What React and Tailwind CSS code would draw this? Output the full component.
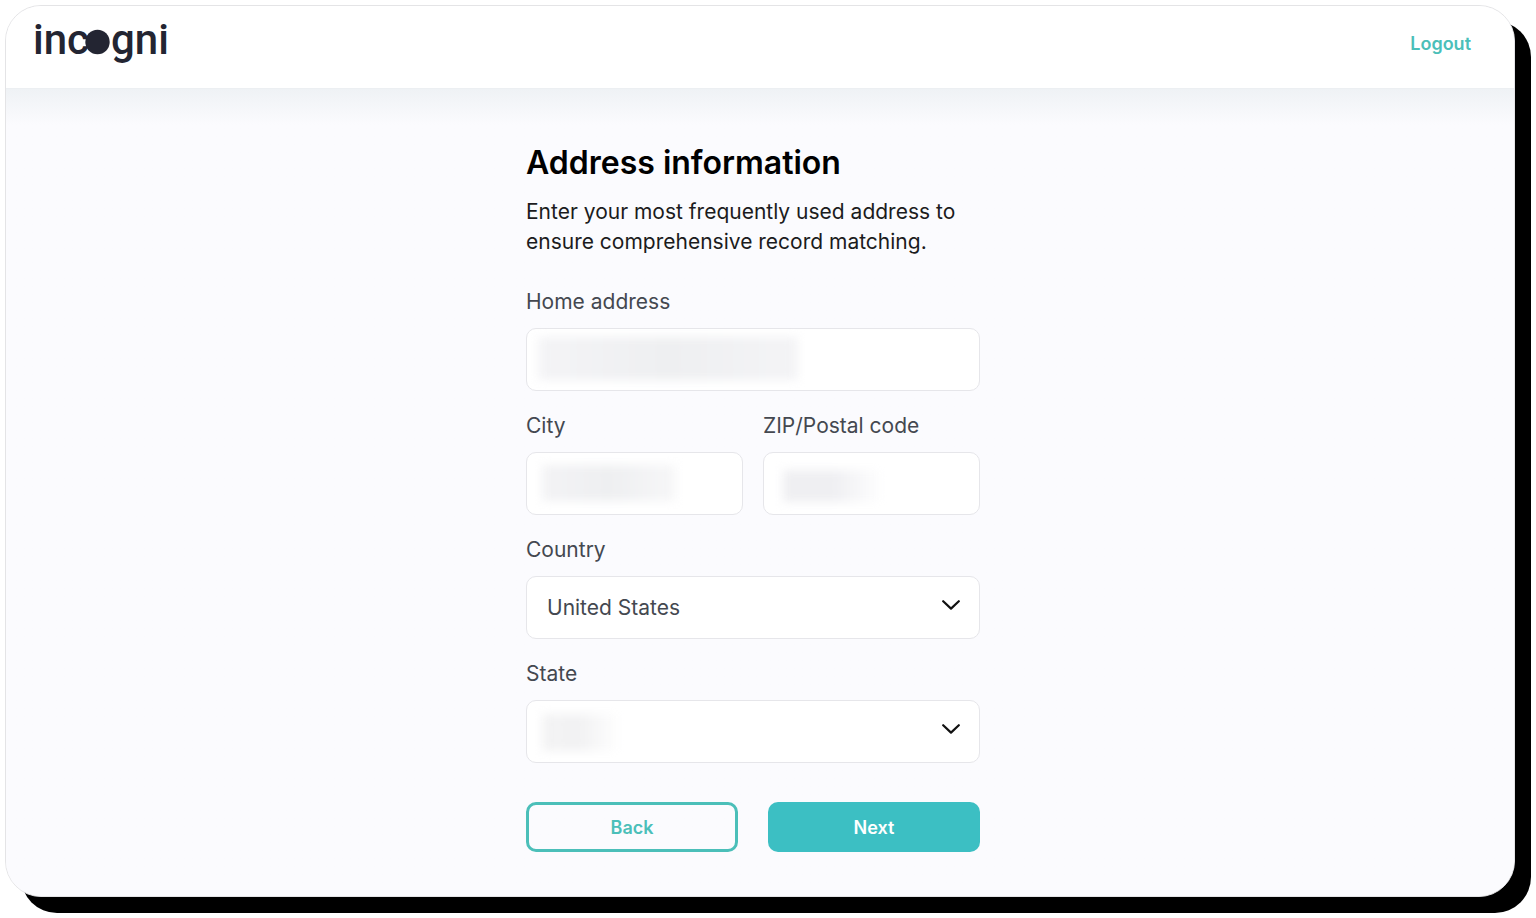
import { useState } from "react";

const fieldClass =
  "block h-[63px] w-full appearance-none rounded-[10px] border border-[#e6e6ea] bg-white px-5 text-[21px] text-[#444850] outline-none focus:border-[#3cbfc3]";

const Logo = () => (
  <svg
    viewBox="0 0 146 60"
    className="h-[60px] w-[146px] text-[#232532]"
    role="img"
    aria-label="incogni"
  >
    <g fill="currentColor" fontFamily="Roboto, sans-serif" fontWeight="500" fontSize="42">
      <text x="3" y="44">
        inc
      </text>
      <text x="81" y="44">
        gni
      </text>
    </g>
    <circle cx="67.5" cy="32" r="12.2" fill="currentColor" />
  </svg>
);

const ChevronIcon = () => (
  <svg
    viewBox="0 0 18 10"
    className="pointer-events-none absolute top-6 right-5 h-[10px] w-[18px]"
    fill="none"
    stroke="#111111"
    strokeWidth="2.2"
    strokeLinecap="round"
    strokeLinejoin="round"
    aria-hidden="true"
  >
    <path d="M1.2 1.2 9 8.6l7.8-7.4" />
  </svg>
);

// Label with its control below, mask hides private values
const Field = ({ id, label, mask, children }) => (
  <div className="min-w-0 flex-1">
    <label htmlFor={id} className="block text-[21px] leading-[30px] text-[#444850]">
      {label}
    </label>
    <div className="relative mt-[11px]">
      {children}
      {mask && (
        <div
          aria-hidden="true"
          className={`pointer-events-none absolute blur-[5px] ${mask}`}
        />
      )}
    </div>
  </div>
);

const App = () => {
  const [form, setForm] = useState({
    address: "",
    city: "",
    zip: "",
    country: "United States",
    state: "",
  });

  const handleChange = (e) => {
    setForm({ ...form, [e.target.name]: e.target.value });
  };

  return (
    <div className="flex min-h-screen bg-white pt-[5px] pr-[21px] pb-[21px] pl-[5px] font-[Inter,sans-serif]">
      <div className="flex flex-1 flex-col overflow-hidden rounded-[36px] border border-[#e4e4e6] bg-[#fbfbfe] shadow-[16px_16px_0_0_#000000]">
        <header className="flex h-[83px] items-start justify-between border-b border-[#eceff2] bg-white pt-1 pr-[43px] pl-6">
          <Logo />
          <a
            href="#logout"
            className="mt-[21px] text-[18px] leading-[26px] font-semibold text-[#4bbfb9]"
          >
            Logout
          </a>
        </header>

        <main className="flex flex-1 justify-center bg-linear-to-b from-[#eff2f5] to-[#fbfbfe] to-[36px] pt-[54px] pr-[14px] pb-11">
          <form className="w-full max-w-[454px]" onSubmit={(e) => e.preventDefault()}>
            <h1 className="text-[32px] leading-[40px] font-semibold text-black">
              Address information
            </h1>
            <p className="mt-[14px] text-[21px] leading-[30px] text-[#1b1b20]">
              Enter your most frequently used address to ensure comprehensive
              record matching.
            </p>

            <div className="mt-[30px] flex flex-col gap-5">
              <Field
                id="address"
                label="Home address"
                mask="top-[9px] left-3 h-[43px] w-[260px] bg-linear-to-r from-[#f4f4f6] via-[#eeeff1] to-[#f4f4f6]"
              >
                <input
                  id="address"
                  name="address"
                  value={form.address}
                  onChange={handleChange}
                  className={fieldClass}
                />
              </Field>

              <div className="flex gap-5">
                <Field
                  id="city"
                  label="City"
                  mask="top-[13px] left-4 h-9 w-[134px] bg-linear-to-r from-[#f3f3f5] via-[#eeeff1] to-[#f7f7f8]"
                >
                  <input
                    id="city"
                    name="city"
                    value={form.city}
                    onChange={handleChange}
                    className={fieldClass}
                  />
                </Field>
                <Field
                  id="zip"
                  label="ZIP/Postal code"
                  mask="top-[18px] left-5 h-8 w-[100px] bg-linear-to-r from-[#efeff2] via-[#efeff2] to-white"
                >
                  <input
                    id="zip"
                    name="zip"
                    value={form.zip}
                    onChange={handleChange}
                    className={fieldClass}
                  />
                </Field>
              </div>

              <Field id="country" label="Country">
                <select
                  id="country"
                  name="country"
                  value={form.country}
                  onChange={handleChange}
                  className={fieldClass}
                >
                  <option>United States</option>
                </select>
                <ChevronIcon />
              </Field>

              <Field
                id="state"
                label="State"
                mask="top-[14px] left-4 h-[37px] w-[78px] bg-linear-to-r from-[#f3f3f4] via-[#f2f2f3] to-white"
              >
                <select
                  id="state"
                  name="state"
                  value={form.state}
                  onChange={handleChange}
                  className={fieldClass}
                >
                  <option value=""></option>
                </select>
                <ChevronIcon />
              </Field>
            </div>

            <div className="mt-[39px] grid grid-cols-2 gap-[30px]">
              <button
                type="button"
                className="h-[50px] rounded-[10px] border-3 border-[#4bbfb9] text-[18px] font-semibold text-[#4bbfb9]"
              >
                Back
              </button>
              <button
                type="submit"
                className="h-[50px] rounded-[10px] bg-[#3cbfc3] text-[18px] font-semibold text-white"
              >
                Next
              </button>
            </div>
          </form>
        </main>
      </div>
    </div>
  );
};

export default App;
